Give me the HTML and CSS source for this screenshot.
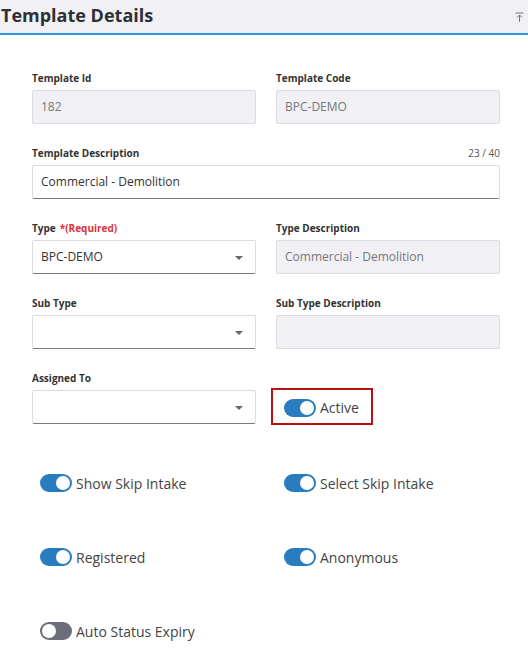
FILE: index.html
```html
<!DOCTYPE html>
<html lang="en">

<head>
    <meta charset="UTF-8">
    <meta name="viewport" content="width=device-width, initial-scale=1.0">
    <title>Template Details</title>
    <link rel="stylesheet" href="styles.css">
</head>

<body>
    <div class="panel-header">
        <h1>Template Details</h1>
        <button class="collapse-button" title="Collapse">
            <svg width="9" height="10" viewBox="0 0 9 10">
                <path d="M0.5 1h8M4.5 3v7M2 5.5l2.5-2.5 2.5 2.5" fill="none" stroke="#777" stroke-width="1"/>
            </svg>
        </button>
    </div>

    <div class="form">
        <div class="field">
            <label>Template Id</label>
            <div class="input disabled">182</div>
        </div>
        <div class="field">
            <label>Template Code</label>
            <div class="input disabled">BPC-DEMO</div>
        </div>

        <div class="field wide">
            <label>Template Description <span class="counter">23 / 40</span></label>
            <div class="input">Commercial - Demolition</div>
        </div>

        <div class="field">
            <label>Type <span class="required">*(Required)</span></label>
            <div class="input select">BPC-DEMO</div>
        </div>
        <div class="field">
            <label>Type Description</label>
            <div class="input disabled">Commercial - Demolition</div>
        </div>

        <div class="field">
            <label>Sub Type</label>
            <div class="input select"></div>
        </div>
        <div class="field">
            <label>Sub Type Description</label>
            <div class="input disabled"></div>
        </div>

        <div class="field">
            <label>Assigned To</label>
            <div class="input select"></div>
        </div>
        <div class="field toggle-field">
            <div class="highlight">
                <span class="toggle on"></span> Active
            </div>
        </div>
    </div>

    <div class="toggles">
        <div class="toggle-row"><span class="toggle on"></span> Show Skip Intake</div>
        <div class="toggle-row"><span class="toggle on"></span> Select Skip Intake</div>
        <div class="toggle-row"><span class="toggle on"></span> Registered</div>
        <div class="toggle-row"><span class="toggle on"></span> Anonymous</div>
        <div class="toggle-row"><span class="toggle"></span> Auto Status Expiry</div>
    </div>
</body>

</html>
```

FILE: styles.css
```css
* {
    margin: 0;
    padding: 0;
    box-sizing: border-box;
}

body {
    font-family: 'Open Sans', sans-serif;
    background-color: #fff;
    color: #333;
}

.panel-header {
    height: 35px;
    background-color: #f1f1f5;
    border-bottom: 2px solid #2d95e8;
    display: flex;
    justify-content: space-between;
    align-items: flex-start;
}

.panel-header h1 {
    font-size: 18px;
    font-weight: 700;
    color: #2f3034;
    line-height: 30px;
    padding-left: 1px;
}

.collapse-button {
    border: none;
    background: none;
    margin: 10px 4px 0 0;
    cursor: pointer;
}

.form {
    display: grid;
    grid-template-columns: 224px 224px;
    column-gap: 20px;
    row-gap: 21px;
    padding: 35px 28px 0 32px;
}

.field label {
    display: flex;
    justify-content: space-between;
    font-size: 10px;
    font-weight: 700;
    line-height: 16px;
    color: #333;
    margin-bottom: 4px;
}

.field.wide {
    grid-column: span 2;
}

.counter {
    font-weight: 400;
    color: #555;
}

.required {
    color: #e0333c;
    margin-left: 4px;
    margin-right: auto;
}

.input {
    height: 34px;
    border: 1px solid #dcdce0;
    border-bottom-color: #7a7a7a;
    border-radius: 2px;
    background-color: #fff;
    font-size: 12px;
    line-height: 32px;
    padding: 0 8px;
    color: #333;
    position: relative;
}

.input.disabled {
    background-color: #f1f1f5;
    border-bottom-color: #dcdce0;
    color: #777;
}

.input.select::after {
    content: '';
    position: absolute;
    right: 12px;
    top: 15px;
    border-left: 4px solid transparent;
    border-right: 4px solid transparent;
    border-top: 4px solid #666;
}

.toggle-field {
    display: flex;
    align-items: flex-end;
}

.highlight {
    margin: 0 0 -1px -5px;
    width: 102px;
    height: 37px;
    border: 2px solid #b80f0f;
    display: flex;
    align-items: center;
    gap: 4px;
    padding: 2px 0 0 11px;
    font-size: 14px;
    color: #444;
}

.toggles {
    display: grid;
    grid-template-columns: 224px 224px;
    column-gap: 20px;
    row-gap: 54px;
    padding: 49px 28px 0 40px;
}

.toggle-row {
    display: flex;
    align-items: center;
    gap: 4px;
    height: 20px;
    font-size: 14px;
    color: #444;
}

.toggle {
    width: 32px;
    height: 18px;
    border-radius: 9px;
    background-color: #6b6e78;
    position: relative;
    flex-shrink: 0;
}

.toggle::after {
    content: '';
    position: absolute;
    top: 2px;
    left: 2px;
    width: 14px;
    height: 14px;
    border-radius: 50%;
    background-color: #fff;
}

.toggle.on {
    background-color: #2a7cc0;
}

.toggle.on::after {
    left: 16px;
}
```
